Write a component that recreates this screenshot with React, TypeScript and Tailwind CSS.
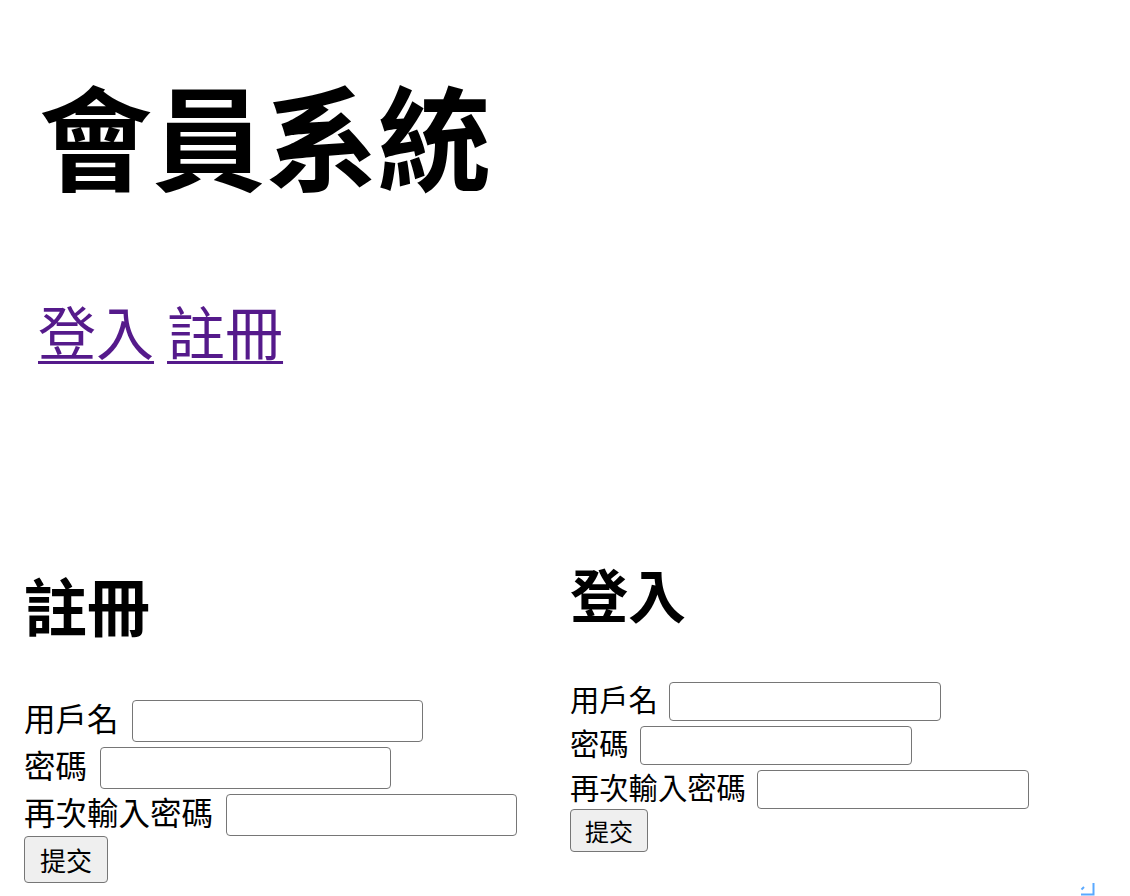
import React from "react";

const font = { fontFamily: '"Noto Sans CJK TC", "Noto Sans CJK SC", sans-serif' };

type FormProps = {
  title: string;
  big: boolean;
};

const MemberForm = ({ title, big }: FormProps) => {
  const labelCls = big ? "text-[31.5px] mr-[13px]" : "text-[29.3px] mr-[11px]";
  const inputCls = big
    ? "w-[291px] h-[42px] border border-[#767676] rounded-[4px] bg-white"
    : "w-[272px] h-[39px] border border-[#767676] rounded-[4px] bg-white";
  const rowCls = big ? "flex items-center h-[42px]" : "flex items-center h-[39px]";
  const rows = ["用戶名", "密碼", "再次輸入密碼"];

  return (
    <div className="flex flex-col">
      <h2
        className={
          big
            ? "text-[63px] font-bold leading-none text-black mt-[572px] mb-[65px]"
            : "text-[58px] font-bold leading-none text-black mt-[564px] mb-[60px]"
        }
      >
        {title}
      </h2>
      <form className="flex flex-col gap-[5px]">
        {rows.map((r) => (
          <div key={r} className={rowCls}>
            <span className={labelCls + " relative -top-[3px] leading-none text-black"}>{r}</span>
            <input type="text" className={inputCls} />
          </div>
        ))}
        <div className="-mt-[5px]">
          <button
            type="button"
            className={
              big
                ? "h-[47px] px-[15px] text-[26px] leading-none border border-[#767676] rounded-[4px] bg-[#efefef] text-black"
                : "h-[43px] px-[14px] text-[24px] leading-none border border-[#767676] rounded-[4px] bg-[#efefef] text-black"
            }
            style={font}
          >
            提交
          </button>
        </div>
      </form>
    </div>
  );
};

const App = () => {
  return (
    <div className="relative w-[1130px] h-[896px] overflow-hidden bg-white" style={font}>
      <div className="absolute inset-0">
        <h1 className="absolute left-[39px] top-[77px] text-[113px] font-bold leading-none text-black">
          會員系統
        </h1>
        <div className="absolute left-[38px] top-[301px] text-[58px] leading-none">
          <a href="#login" className="text-[#551a8b] underline underline-offset-[6px] decoration-[3px]">
            登入
          </a>
          <span> </span>
          <a href="#register" className="text-[#551a8b] underline underline-offset-[6px] decoration-[3px]">
            註冊
          </a>
        </div>
      </div>
      <div className="relative flex flex-row">
        <div className="ml-[24px] w-[546px]">
          <MemberForm title="註冊" big />
        </div>
        <div>
          <MemberForm title="登入" big={false} />
        </div>
      </div>
      <svg className="absolute left-[1078px] top-[882px]" width="18" height="14" viewBox="0 0 18 14">
        <path d="M15.5 1 V12.5 H3" fill="none" stroke="#5aa9ff" strokeWidth="2" />
        <path d="M3.5 7.5 L6 5" fill="none" stroke="#5aa9ff" strokeWidth="2" />
      </svg>
    </div>
  );
};

export default App;
